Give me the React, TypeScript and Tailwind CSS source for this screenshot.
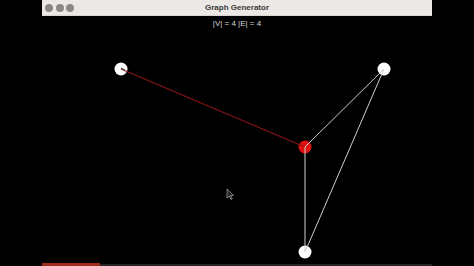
import React from "react";

const nodes = [
  { x: 79, y: 54, fill: "#ffffff" },
  { x: 342, y: 54, fill: "#ffffff" },
  { x: 263, y: 132, fill: "#e01010" },
  { x: 263, y: 237, fill: "#ffffff" },
];

export default function App() {
  return (
    <div
      className="w-[474px] h-[266px] bg-black flex justify-center overflow-hidden"
      style={{ fontFamily: '"Liberation Sans", Arial, sans-serif' }}
    >
      <div className="w-[390px] h-[266px] flex flex-col">
        <div className="h-[16px] bg-[#ebe8e5] relative flex items-center justify-center border-b border-[#d8d5d2]">
          <div className="absolute left-[3px] top-[4px] flex gap-[2.5px]">
            <div className="w-[8px] h-[8px] rounded-full bg-[#8a8887]" />
            <div className="w-[8px] h-[8px] rounded-full bg-[#8a8887]" />
            <div className="w-[8px] h-[8px] rounded-full bg-[#8a8887]" />
          </div>
          <span className="text-[8px] font-bold text-[#3a3a3a] leading-none pt-[1px]">Graph Generator</span>
        </div>
        <div className="relative flex-1 bg-black flex flex-col items-center">
          <span className="mt-[4px] text-[8px] text-[#d8d8d8] leading-none">|V| = 4 |E| = 4</span>
          <svg className="absolute inset-0" width="390" height="250" viewBox="0 1 390 250">
            {nodes.map((n, i) => (
              <circle key={i} cx={n.x} cy={n.y} r={6.5} fill={n.fill} />
            ))}
            <line x1={79} y1={54} x2={263} y2={132} stroke="#8a1414" strokeWidth={1.1} />
            <line x1={83} y1={55} x2={79} y2={53} stroke="#555" strokeWidth={1.2} />
            <line x1={263} y1={132} x2={342} y2={54} stroke="#cfcfcf" strokeWidth={1} />
            <line x1={263} y1={132} x2={263} y2={237} stroke="#cfcfcf" strokeWidth={1} />
            <line x1={342} y1={54} x2={263} y2={237} stroke="#cfcfcf" strokeWidth={1} />
            <path
              d="M185 174 L185 183 L187.3 181 L189 184.5 L190.3 183.8 L188.7 180.5 L191.5 180.3 Z"
              fill="#222"
              stroke="#9a9a9a"
              strokeWidth={0.8}
            />
            <rect x={0} y={248} width={58} height={3} fill="#9e2a1c" />
            <rect x={58} y={249} width={332} height={2} fill="#262626" />
          </svg>
        </div>
      </div>
    </div>
  );
}
